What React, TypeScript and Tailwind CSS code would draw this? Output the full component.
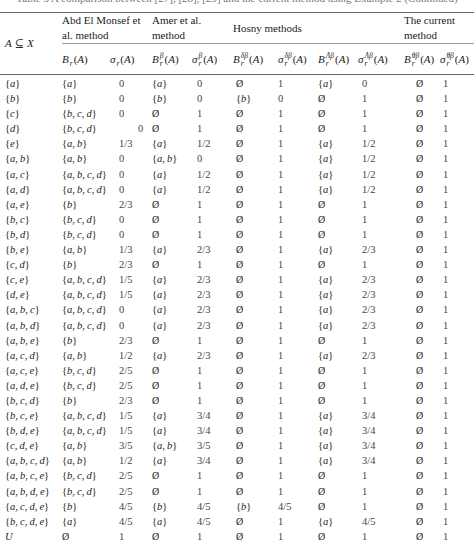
const sets: string[][] = [
  ["a", "a", "0", "a", "0", "-", "1", "a", "0", "-", "1"],
  ["b", "b", "0", "b", "0", "b", "0", "-", "1", "-", "1"],
  ["c", "b,c,d", "0", "-", "1", "-", "1", "-", "1", "-", "1"],
  ["d", "b,c,d", "0", "-", "1", "-", "1", "-", "1", "-", "1"],
  ["e", "a,b", "1/3", "a", "1/2", "-", "1", "a", "1/2", "-", "1"],
  ["a,b", "a,b", "0", "a,b", "0", "-", "1", "a", "1/2", "-", "1"],
  ["a,c", "a,b,c,d", "0", "a", "1/2", "-", "1", "a", "1/2", "-", "1"],
  ["a,d", "a,b,c,d", "0", "a", "1/2", "-", "1", "a", "1/2", "-", "1"],
  ["a,e", "b", "2/3", "-", "1", "-", "1", "-", "1", "-", "1"],
  ["b,c", "b,c,d", "0", "-", "1", "-", "1", "-", "1", "-", "1"],
  ["b,d", "b,c,d", "0", "-", "1", "-", "1", "-", "1", "-", "1"],
  ["b,e", "a,b", "1/3", "a", "2/3", "-", "1", "a", "2/3", "-", "1"],
  ["c,d", "b", "2/3", "-", "1", "-", "1", "-", "1", "-", "1"],
  ["c,e", "a,b,c,d", "1/5", "a", "2/3", "-", "1", "a", "2/3", "-", "1"],
  ["d,e", "a,b,c,d", "1/5", "a", "2/3", "-", "1", "a", "2/3", "-", "1"],
  ["a,b,c", "a,b,c,d", "0", "a", "2/3", "-", "1", "a", "2/3", "-", "1"],
  ["a,b,d", "a,b,c,d", "0", "a", "2/3", "-", "1", "a", "2/3", "-", "1"],
  ["a,b,e", "b", "2/3", "-", "1", "-", "1", "-", "1", "-", "1"],
  ["a,c,d", "a,b", "1/2", "a", "2/3", "-", "1", "a", "2/3", "-", "1"],
  ["a,c,e", "b,c,d", "2/5", "-", "1", "-", "1", "-", "1", "-", "1"],
  ["a,d,e", "b,c,d", "2/5", "-", "1", "-", "1", "-", "1", "-", "1"],
  ["b,c,d", "b", "2/3", "-", "1", "-", "1", "-", "1", "-", "1"],
  ["b,c,e", "a,b,c,d", "1/5", "a", "3/4", "-", "1", "a", "3/4", "-", "1"],
  ["b,d,e", "a,b,c,d", "1/5", "a", "3/4", "-", "1", "a", "3/4", "-", "1"],
  ["c,d,e", "a,b", "3/5", "a,b", "3/5", "-", "1", "a", "3/4", "-", "1"],
  ["a,b,c,d", "a,b", "1/2", "a", "3/4", "-", "1", "a", "3/4", "-", "1"],
  ["a,b,c,e", "b,c,d", "2/5", "-", "1", "-", "1", "-", "1", "-", "1"],
  ["a,b,d,e", "b,c,d", "2/5", "-", "1", "-", "1", "-", "1", "-", "1"],
  ["a,c,d,e", "b", "4/5", "b", "4/5", "b", "4/5", "-", "1", "-", "1"],
  ["b,c,d,e", "a", "4/5", "a", "4/5", "-", "1", "a", "4/5", "-", "1"],
  ["U", "-", "1", "-", "1", "-", "1", "-", "1", "-", "1"],
];

// left padding of the data in each column (data sits a bit right of the header in some)
const pads = [
  "pl-0",
  "pl-0",
  "pl-[9px]",
  "pl-0",
  "pl-[5px]",
  "pl-[3px]",
  "pl-0",
  "pl-0",
  "pl-[4px]",
  "pl-[12px]",
  "pl-[3px]",
];

const grid =
  "grid grid-cols-[57px_48px_42px_40px_41px_45px_40px_40px_46px_36px_34px]";

function Cell({ v, col }: { v: string; col: number }) {
  if (v === "-") return <span className="text-[10px]">Ø</span>;
  if (v === "U") return <i>U</i>;
  if (col % 2 === 0 && col > 0) return <span className="text-[#444]">{v}</span>;
  const parts = v.split(",");
  return (
    <span>
      {"{"}
      {parts.map((p, i) => (
        <span key={i}>
          <i>{p}</i>
          {i < parts.length - 1 ? ",\u2009" : ""}
        </span>
      ))}
      {"}"}
    </span>
  );
}

function Sym({ base, sup, sub }: { base: string; sup?: string; sub: string }) {
  return (
    <span className="whitespace-nowrap text-[11px]">
      <i>{base}</i>
      <span className="inline-flex flex-col align-middle text-[7.5px] leading-[7.5px] ml-[1px]">
        <span className="italic">{sup || "\u00a0"}</span>
        <i>{sub}</i>
      </span>
      <span className="ml-[1px]">(</span>
      <i>A</i>)
    </span>
  );
}

export default function App() {
  return (
    <div
      className="w-[474px] h-[545px] overflow-hidden bg-white text-[#222] text-[10.5px]"
      style={{ fontFamily: '"Liberation Serif", "DejaVu Serif", serif' }}
    >
      <div className="h-[12px] overflow-hidden flex justify-center">
        <div className="-mt-[10px] text-[11px] text-[#777] whitespace-nowrap">
          Table 5 A comparison between [27], [28], [29] and the current method using Example 2 (Continued)
        </div>
      </div>
      <div className="border-t border-[#666]">
        <div className={grid + " pl-[5px]"}>
          <div className="row-span-2 flex items-center italic text-[11px]">
            A <span className="not-italic mx-[3px]">⊆</span> X
          </div>
          <div className="col-span-2 border-b border-[#999] h-[31px] flex flex-col justify-center leading-[15px] mr-[-1px] text-[11px]">
            <span>Abd El Monsef et</span>
            <span>al. method</span>
          </div>
          <div className="col-span-2 border-b border-[#999] h-[31px] flex flex-col justify-center leading-[15px] text-[11px]">
            <span>Amer et al.</span>
            <span>method</span>
          </div>
          <div className="col-span-4 border-b border-[#999] h-[31px] flex items-center text-[11px]">
            <span>Hosny methods</span>
          </div>
          <div className="col-span-2 border-b border-[#999] h-[31px] flex flex-col justify-center leading-[15px] -mr-[5px] text-[11px]">
            <span>The current</span>
            <span>method</span>
          </div>
          <div className="h-[30px] flex items-center">
            <Sym base="B" sub="r" />
          </div>
          <div className="h-[30px] flex items-center">
            <Sym base="σ" sub="r" />
          </div>
          <div className="h-[30px] flex items-center">
            <Sym base="B" sup="β" sub="r" />
          </div>
          <div className="h-[30px] flex items-center">
            <Sym base="σ" sup="β" sub="r" />
          </div>
          <div className="h-[30px] flex items-center">
            <Sym base="B" sup="δβ" sub="r" />
          </div>
          <div className="h-[30px] flex items-center">
            <Sym base="σ" sup="δβ" sub="r" />
          </div>
          <div className="h-[30px] flex items-center">
            <Sym base="B" sup="Λβ" sub="r" />
          </div>
          <div className="h-[30px] flex items-center">
            <Sym base="σ" sup="Λβ" sub="r" />
          </div>
          <div className="h-[30px] flex items-center">
            <Sym base="B" sup="θβ" sub="r" />
          </div>
          <div className="h-[30px] flex items-center">
            <Sym base="σ" sup="θβ" sub="r" />
          </div>
        </div>
      </div>
      <div className="border-t border-[#666] pt-[1px] pl-[5px]">
        {sets.map((row, r) => (
          <div key={r} className={grid + " h-[15.1px] items-center"}>
            {row.map((v, c) => (
              <div
                key={c}
                className={
                  pads[c] + (r === 3 && c === 2 ? " !pl-[28px]" : "") + " whitespace-nowrap"
                }
              >
                <Cell v={v} col={c} />
              </div>
            ))}
          </div>
        ))}
      </div>
    </div>
  );
}
